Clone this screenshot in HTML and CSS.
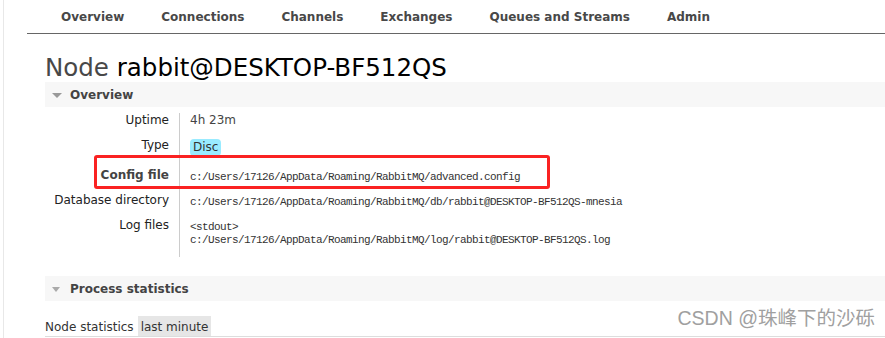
FILE: index.html
```html
<!DOCTYPE html>
<html lang="en">
<head>
<meta charset="utf-8">
<title>Node rabbit@DESKTOP-BF512QS</title>
<link rel="stylesheet" href="styles.css">
</head>
<body>
<div class="page">
  <nav class="nav">
    <ul class="nav-list">
      <li class="nav-item">Overview</li>
      <li class="nav-item">Connections</li>
      <li class="nav-item">Channels</li>
      <li class="nav-item">Exchanges</li>
      <li class="nav-item">Queues and Streams</li>
      <li class="nav-item">Admin</li>
    </ul>
  </nav>
  <main class="main">
    <h1 class="title"><span class="title-kind">Node</span> rabbit@DESKTOP-BF512QS</h1>
    <section class="section">
      <h2 class="band"><span class="tri"></span>Overview</h2>
      <div class="facts">
        <div class="fk">Uptime</div><div class="fv">4h 23m</div>
        <div class="fk">Type</div><div class="fv"><span class="badge">Disc</span></div>
        <div class="fk fk-bold">Config file</div><div class="fv mono">c:/Users/17126/AppData/Roaming/RabbitMQ/advanced.config</div>
        <div class="fk">Database directory</div><div class="fv mono">c:/Users/17126/AppData/Roaming/RabbitMQ/db/rabbit@DESKTOP-BF512QS-mnesia</div>
        <div class="fk">Log files</div><div class="fv mono">&lt;stdout&gt;<br>c:/Users/17126/AppData/Roaming/RabbitMQ/log/rabbit@DESKTOP-BF512QS.log</div>
      </div>
    </section>
    <section class="section section-stats">
      <h2 class="band"><span class="tri tri-small"></span>Process statistics</h2>
      <div class="stats-row">
        <span class="stats-label">Node statistics</span><span class="stats-range">last minute</span>
      </div>
    </section>
  </main>
  <div class="highlight"></div>
  <div class="watermark">CSDN @珠峰下的沙砾</div>
</div>
</body>
</html>
```

FILE: styles.css
```css
* { box-sizing: border-box; }
html, body { margin: 0; padding: 0; background: #fff; }
body {
  font-family: "DejaVu Sans", Verdana, sans-serif;
  font-size: 12px;
  color: #333;
  overflow: hidden;
}
.page {
  position: relative;
  margin-left: 3px;
  border-left: 1px solid #e8e8e8;
  min-height: 100vh;
}
.nav {
  margin-left: 23px;
  height: 34px;
  border-bottom: 1px solid #666;
}
.nav-list {
  list-style: none;
  margin: 0;
  padding: 0 0 0 15.5px;
  display: flex;
}
.nav-item {
  padding: 2px 18.5px 0 18.5px;
  line-height: 31px;
  font-weight: bold;
  color: #484848;
  white-space: nowrap;
}
.main { padding-left: 41px; }
.title {
  margin: 20px 0 0 0;
  font-size: 24.5px;
  line-height: 28px;
  font-weight: normal;
  color: #000;
  white-space: nowrap;
}
.title-kind { color: #484848; }
.band {
  margin: 0;
  height: 25px;
  background: #f7f7f7;
  display: flex;
  align-items: center;
  padding-left: 7px;
  font-size: 12px;
  font-weight: bold;
  color: #444;
}
.tri {
  width: 0;
  height: 0;
  border-left: 5px solid transparent;
  border-right: 5px solid transparent;
  border-top: 5px solid #999;
  margin-right: 8px;
  margin-top: 1px;
}
.tri-small {
  border-left-width: 4px;
  border-right-width: 4px;
  border-top-color: #aaa;
  margin-left: 0;
  margin-right: 10px;
}
.facts {
  margin-top: 6px;
  display: grid;
  grid-template-columns: 134px 1fr;
  grid-template-rows: 25px 30px 25px 25px 39px;
}
.fk {
  text-align: right;
  padding-right: 10px;
  line-height: 14px;
  color: #222;
  white-space: nowrap;
}
.fk-bold { font-weight: bold; color: #444; }
.fv {
  border-left: 1px solid #ccc;
  padding-left: 10px;
  line-height: 14px;
  color: #444;
  white-space: nowrap;
}
.mono {
  font-family: "Liberation Mono", "DejaVu Sans Mono", monospace;
  font-size: 11px;
  letter-spacing: -0.6px;
  line-height: 13px;
  padding-top: 3px;
  color: #333;
}
.badge {
  display: inline-block;
  margin-top: 1px;
  padding: 0 3px;
  line-height: 17px;
  background: #99ebff;
  border-radius: 4px;
  color: #333;
}
.section-stats { margin-top: 19px; }
.stats-row {
  margin-top: 15px;
  display: flex;
  align-items: stretch;
  height: 21px;
  border-bottom: 1px solid #ddd;
}
.stats-label {
  line-height: 22px;
  color: #333;
  padding-right: 4px;
}
.stats-range {
  line-height: 22px;
  background: #e6e6e6;
  padding: 0 3px;
  color: #333;
}
.highlight {
  position: absolute;
  left: 90px;
  top: 155px;
  width: 456px;
  height: 34px;
  border: 3px solid #fa2222;
  border-radius: 3px;
}
.watermark {
  position: absolute;
  right: 10px;
  top: 306px;
  font-family: "Liberation Sans", "Noto Sans CJK SC", sans-serif;
  font-size: 19.5px;
  line-height: 24px;
  color: #a0a0a0;
  text-shadow: 0 0 1px #fff, 1px 1px 0 #fff, -1px -1px 0 #fff;
  white-space: nowrap;
}
```
